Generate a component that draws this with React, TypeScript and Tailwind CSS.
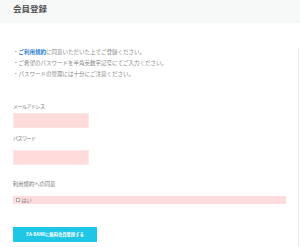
export default function App() {
  const font = "[font-family:'Noto_Sans_CJK_JP','Noto_Sans',sans-serif]"
  return (
    <div className={`w-[300px] h-[247px] bg-white overflow-hidden ${font}`}>
      <div className="h-[23px] bg-[#f7f8f8] pl-[13px] pt-[2.5px]">
        <h1 className="text-[8.5px] leading-[11px] font-bold text-[#555]">会員登録</h1>
      </div>
      <div className="w-[299px] h-[224px] border-r border-[#ececec] pl-[13px]">
        <ul className="mt-[24px] text-[5.5px] leading-[11px] text-[#888]">
          <li>
            ・<span className="text-[#2b7fd4] font-bold">ご利用規約</span>に同意いただいた上でご登録ください。
          </li>
          <li>・ご希望のパスワードを半角英数字記号にてご入力ください。</li>
          <li>・パスワードの管理には十分にご注意ください。</li>
        </ul>

        <label className="block mt-[22px] text-[5px] leading-[8px] text-[#777] tracking-[-0.5px]">
          メールアドレス
        </label>
        <input
          type="email"
          className="block mt-[3px] w-[76px] h-[15px] bg-[#ffdcdc] border border-[#ffe6e6] outline-none"
        />

        <label className="block mt-[6px] text-[5px] leading-[8px] text-[#777] tracking-[-0.5px]">
          パスワード
        </label>
        <input
          type="password"
          className="block mt-[8px] w-[76px] h-[15px] bg-[#ffdcdc] border border-[#ffe6e6] outline-none"
        />

        <label className="block mt-[15px] text-[5.3px] leading-[8px] text-[#777]">利用規約への同意</label>
        <div className="mt-[8px] w-[273px] h-[8px] bg-[#ffdcdc] flex items-center pl-[3px] gap-[2px]">
          <span className="w-[3.5px] h-[3.5px] border-[0.5px] border-[#aaa] bg-white" />
          <span className="text-[5px] leading-[8px] text-[#777]">はい</span>
        </div>

        <button className="mt-[23px] w-[84px] h-[15px] bg-[#1fc6e6] text-white text-[4.3px] font-bold flex items-center justify-center">
          EA-BANKに無料会員登録する
        </button>
      </div>
    </div>
  )
}
